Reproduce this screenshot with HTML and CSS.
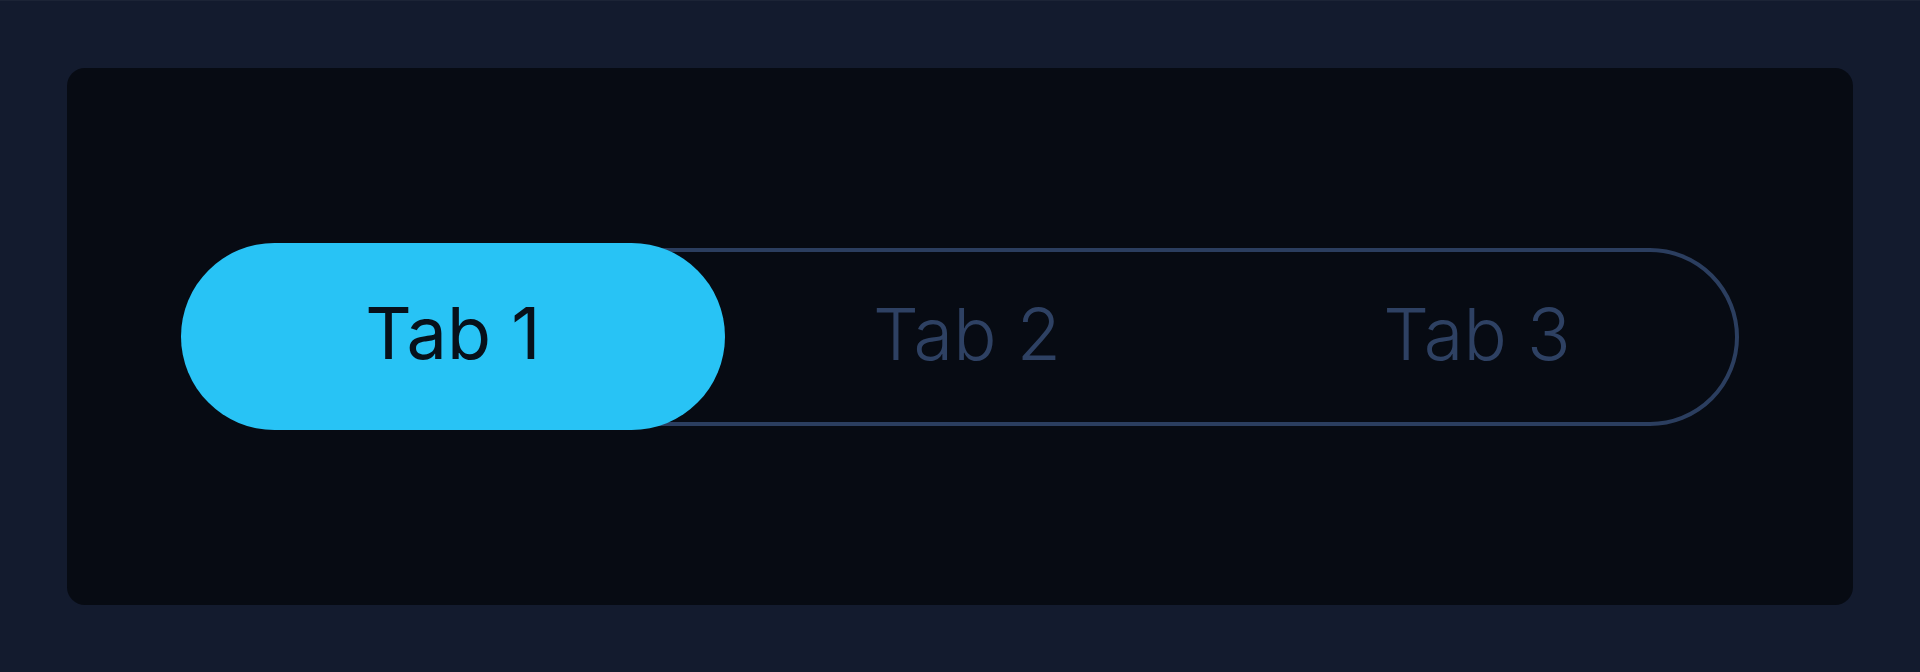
FILE: index.html
```html
<!DOCTYPE html>
<html lang="en">

<head>
    <meta charset="UTF-8">
    <meta name="viewport" content="width=device-width, initial-scale=1.0">
    <title>Tabs</title>
    <link rel="stylesheet" href="styles.css">
</head>

<body>
    <div class="panel">
        <!-- Tabs -->
        <div class="tabs">
            <div class="tab active">Tab 1</div>
            <div class="tab second">Tab 2</div>
            <div class="tab third">Tab 3</div>
        </div>
    </div>
</body>

</html>
```

FILE: styles.css
```css
* {
    box-sizing: border-box;
}

body {
    margin: 0;
    height: 672px;
    padding: 67px;
    background-color: #131b2e;
    border-top: 1px solid #1c2436;
    font-family: Inter, "Noto Sans", sans-serif;
}

.panel {
    height: 100%;
    padding-left: 119px;
    display: flex;
    align-items: center;
    background-color: #070b13;
    border-radius: 18px;
}

.tabs {
    display: flex;
    width: 1553px;
    height: 178px;
    border: 4px solid #2b3e5f;
    border-radius: 999px;
}

.tab {
    display: flex;
    align-items: center;
    justify-content: center;
    padding-bottom: 7px;
    font-size: 72px;
    font-weight: 300;
    color: #2e4163;
    cursor: pointer;
}

.active {
    width: 544px;
    margin: -9px 0 -8px -9px;
    background-color: #28c3f5;
    border-radius: 999px;
    color: #07101a;
    font-weight: 400;
}

.second {
    width: 484px;
}

.third {
    flex: 1;
    padding-left: 10px;
}
```
